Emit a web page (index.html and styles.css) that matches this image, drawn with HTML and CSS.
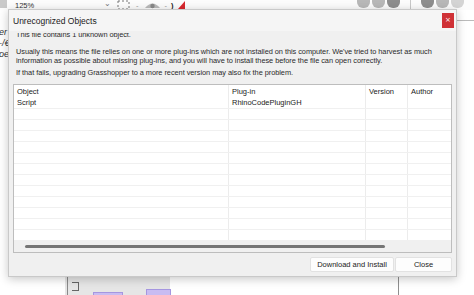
FILE: index.html
```html
<!DOCTYPE html>
<html lang="en">
<head>
  <meta charset="UTF-8" />
  <title>Grasshopper - Unrecognized Objects</title>
  <link rel="stylesheet" href="styles.css">
</head>
<body>
  <div class="app">
    <div class="toolbar">
      <span class="tb-tab"></span>
      <div class="zoom-combo"><span>125%</span><span class="caret">&#8964;</span></div>
      <svg class="tb-icon" width="16" height="10" viewBox="0 0 16 10">
        <rect x="2" y="1" width="11" height="8" fill="none" stroke="#777" stroke-width="1" stroke-dasharray="2 2"/>
      </svg>
      <span class="tb-dash">-</span>
      <svg class="tb-icon" width="17" height="10" viewBox="0 0 17 10">
        <path d="M1 8 Q8.5 -1 16 8 Z" fill="#bbb"/>
        <circle cx="8.5" cy="6" r="2.2" fill="#888"/>
      </svg>
      <span class="tb-dash">-</span>
      <span class="tb-paren">)</span>
      <svg class="tb-icon" width="9" height="10" viewBox="0 0 9 10">
        <path d="M1 9 L8 1 L8 9 Z" fill="#d8282e"/>
      </svg>
      <div class="tb-right">
        <span class="blob"></span>
        <span class="blob"></span>
        <span class="blob dark"></span>
        <span class="tb-sep"></span>
        <span class="blob dark"></span>
        <span class="blob"></span>
        <span class="blob light"></span>
      </div>
    </div>

    <!-- grasshopper canvas behind the dialog -->
    <div class="canvas">
      <div class="node note"><i>er</i><i>-/€</i><i>oe</i></div>
      <div class="node comp">
        <span class="comp-edge"></span>
        <span class="comp-hook"></span>
      </div>
      <span class="node port port-a"></span>
      <span class="node port port-b"></span>
      <span class="node wire"></span>
      <span class="node rule"></span>
    </div>
  </div>

  <div class="dialog">
    <div class="dlg-title">
      <span>Unrecognized Objects</span>
      <button class="dlg-close">&#215;</button>
    </div>

    <div class="dlg-message">
      <div class="msg-inner">
        <p class="msg-first">This file contains 1 unknown object.</p>
        <p class="msg-main">Usually this means the file relies on one or more plug-ins which are not installed on this computer. We've tried to harvest as much information as possible about missing plug-ins, and you will have to install these before the file can open correctly.</p>
        <p>If that fails, upgrading Grasshopper to a more recent version may also fix the problem.</p>
      </div>
    </div>

    <div class="obj-table">
      <div class="obj-row obj-head">
        <div>Object</div><div>Plug-in</div><div>Version</div><div>Author</div>
      </div>
      <div class="obj-body">
        <div class="obj-row"><div>Script</div><div>RhinoCodePluginGH</div><div></div><div></div></div>
        <div class="obj-row"><div></div><div></div><div></div><div></div></div>
        <div class="obj-row"><div></div><div></div><div></div><div></div></div>
        <div class="obj-row"><div></div><div></div><div></div><div></div></div>
        <div class="obj-row"><div></div><div></div><div></div><div></div></div>
        <div class="obj-row"><div></div><div></div><div></div><div></div></div>
        <div class="obj-row"><div></div><div></div><div></div><div></div></div>
        <div class="obj-row"><div></div><div></div><div></div><div></div></div>
        <div class="obj-row"><div></div><div></div><div></div><div></div></div>
        <div class="obj-row"><div></div><div></div><div></div><div></div></div>
        <div class="obj-row"><div></div><div></div><div></div><div></div></div>
        <div class="obj-row"><div></div><div></div><div></div><div></div></div>
        <div class="obj-row"><div></div><div></div><div></div><div></div></div>
      </div>
      <div class="hscroll"><span class="thumb"></span></div>
    </div>

    <div class="dlg-buttons">
      <button class="btn btn-install">Download and Install</button>
      <button class="btn btn-close">Close</button>
    </div>
  </div>
</body>
</html>
```

FILE: styles.css
```css
body {
  margin: 0;
  width: 474px;
  height: 295px;
  overflow: hidden;
  background-color: #fff;
  font-family: 'Liberation Sans', Arial, sans-serif;
  position: relative;
}
.app {
  display: flex;
  flex-direction: column;
  height: 295px;
}
.toolbar {
  height: 10px;
  display: flex;
  align-items: center;
  background-color: #fcfcfc;
  font-size: 7.5px;
  color: #333;
}
.tb-tab {
  width: 7px;
  height: 8px;
  margin-top: -2px;
  background-color: #c9c9c9;
}
.zoom-combo {
  display: flex;
  justify-content: space-between;
  width: 96px;
  margin-left: 8px;
  padding-right: 4px;
}
.caret {
  color: #777;
  font-size: 8px;
  line-height: 6px;
}
.tb-icon {
  display: block;
  margin-left: 1px;
}
.tb-dash {
  color: #999;
  margin: 0 4px;
}
.tb-paren {
  color: #222;
  font-weight: bold;
  margin-right: 2px;
}
.tb-right {
  display: flex;
  align-items: center;
  gap: 2px;
  margin-left: auto;
  margin-right: 10px;
}
.blob {
  width: 13px;
  height: 8px;
  margin-top: -2px;
  border-radius: 0 0 6px 6px;
  background-color: #b8b8b8;
}
.blob.dark {
  background-color: #8e8e8e;
}
.blob.light {
  background-color: #d4d4d4;
}
.tb-sep {
  width: 1px;
  height: 10px;
  margin: 0 8px;
  background-color: #c8c8c8;
}
.canvas {
  flex: 1;
  position: relative;
  background-color: #fff;
}
.node {
  position: absolute;
}
.note {
  left: -1px;
  top: 17px;
  display: flex;
  flex-direction: column;
  font-size: 9px;
  line-height: 11px;
  color: #333;
}
.comp {
  left: 65px;
  top: 230px;
  width: 105px;
  height: 60px;
  background-color: #e6e6e6;
}
.comp-edge {
  position: absolute;
  left: 2px;
  top: 0;
  width: 1px;
  height: 60px;
  background-color: #8a8a8a;
}
.comp-hook {
  position: absolute;
  left: 7px;
  top: 42px;
  width: 6px;
  height: 7px;
  border: 1px solid #666;
  border-left: none;
}
.port {
  background-color: #c8bcf2;
  border: 1px solid #a596e0;
}
.port-a {
  left: 93px;
  top: 282px;
  width: 28px;
  height: 10px;
}
.port-b {
  left: 146px;
  top: 279px;
  width: 23px;
  height: 12px;
}
.wire {
  left: 398px;
  top: 230px;
  width: 1px;
  height: 60px;
  background-color: #8f8f8f;
}
.rule {
  left: 440px;
  top: 10px;
  width: 40px;
  height: 1px;
  background-color: #bbb;
}

/* dialog */
.dialog {
  position: absolute;
  left: 8px;
  top: 9px;
  width: 449px;
  height: 268px;
  box-sizing: border-box;
  display: flex;
  flex-direction: column;
  background-color: #f0f0f0;
  border: 1px solid #c9c9c9;
  box-shadow: 0 2px 9px rgba(0,0,0,0.22);
  font-size: 7.5px;
  color: #222;
}
.dlg-title {
  height: 21px;
  display: flex;
  align-items: center;
  justify-content: space-between;
  padding-left: 4px;
  background-color: #f5f5f5;
  font-size: 8.5px;
  color: #1a1a1a;
}
.dlg-close {
  align-self: flex-start;
  width: 12px;
  height: 15px;
  margin-top: 3px;
  margin-right: 2px;
  padding: 0;
  border: none;
  background-color: #cf3136;
  color: #fff;
  font-size: 7px;
  font-family: 'DejaVu Sans', sans-serif;
  line-height: 15px;
}
.dlg-message {
  height: 45px;
  margin-top: 2px;
  overflow: hidden;
  padding: 0 16px 0 7px;
}
.msg-inner {
  margin-top: -3px;
}
.dlg-message p {
  margin: 0;
  font-size: 7.4px;
  letter-spacing: -0.05px;
  line-height: 9px;
  color: #2a2a2a;
}
.dlg-message .msg-first {
  margin-bottom: 7.5px;
}
.dlg-message .msg-main {
  margin-bottom: 3.7px;
}
.obj-table {
  height: 169px;
  box-sizing: border-box;
  margin: 6px 4px 0 4px;
  display: flex;
  flex-direction: column;
  background-color: #fff;
  border: 1px solid #bdbdbd;
}
.obj-row {
  display: grid;
  grid-template-columns: 215px 137px 42px 1fr;
  height: 11px;
  box-sizing: border-box;
  border-bottom: 1px solid #f0f0f0;
}
.obj-row div {
  padding-left: 3px;
  line-height: 10px;
  border-right: 1px solid #ececec;
  white-space: nowrap;
}
.obj-row div:last-child {
  border-right: none;
}
.obj-head {
  height: 13px;
  border-bottom: none;
}
.obj-head div {
  line-height: 13px;
}
.obj-body {
  flex: 1;
  overflow: hidden;
}
.hscroll {
  height: 12px;
  display: flex;
  align-items: center;
  padding-left: 11px;
  background-color: #f0f0f0;
}
.thumb {
  width: 360px;
  height: 3px;
  border-radius: 2px;
  background-color: #767676;
}
.dlg-buttons {
  flex: 1;
  display: flex;
  justify-content: flex-end;
  align-items: flex-start;
  gap: 1px;
  padding: 4px 4px 0 0;
}
.btn {
  height: 15px;
  padding: 0;
  border: 1px solid #e2e2e2;
  border-radius: 2px;
  background-color: #fdfdfd;
  font-family: 'Liberation Sans', Arial, sans-serif;
  font-size: 7.5px;
  color: #222;
}
.btn-install {
  width: 84px;
}
.btn-close {
  width: 57px;
}
```
